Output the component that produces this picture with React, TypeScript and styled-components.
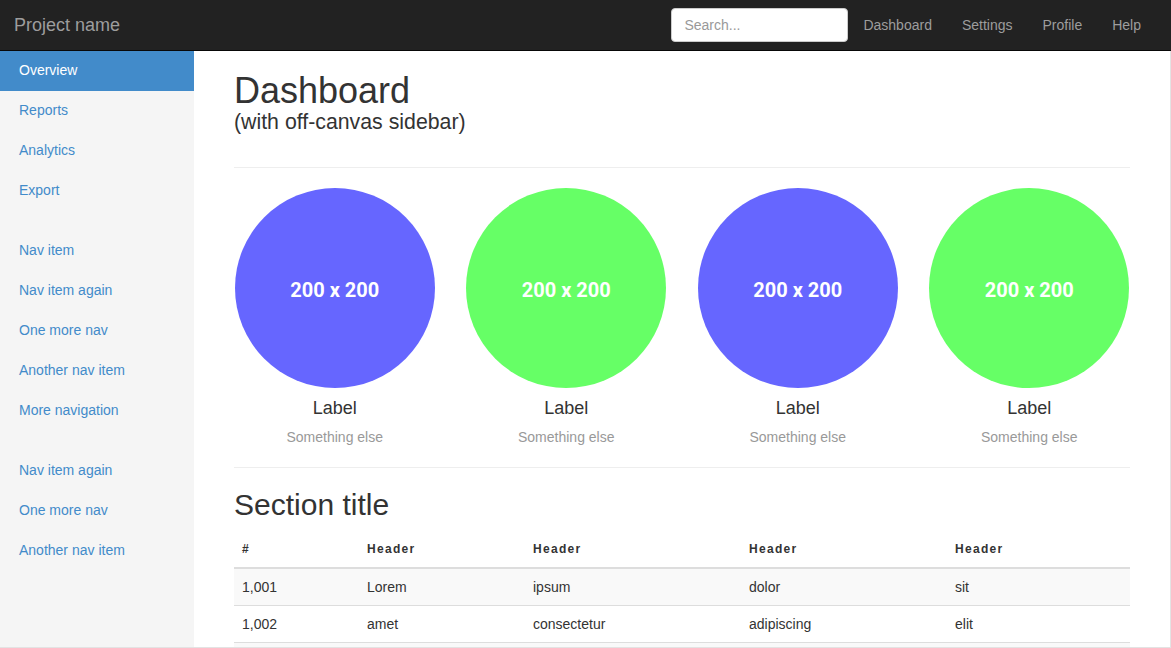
import React from "react";
import styled, { createGlobalStyle } from "styled-components";

const GlobalStyle = createGlobalStyle`
  * {
    box-sizing: border-box;
  }
  html, body {
    margin: 0;
    padding: 0;
    height: 100%;
  }
  body {
    font-family: "Liberation Sans", Arial, Helvetica, sans-serif;
    font-size: 14px;
    line-height: 20px;
    color: #333;
    background: #fff;
    overflow: hidden;
  }
`;

const Page = styled.div`
  display: flex;
  flex-direction: column;
  height: 100vh;
`;

const Navbar = styled.header`
  display: flex;
  align-items: center;
  height: 51px;
  flex-shrink: 0;
  padding: 0 15px 0 14px;
  background: #222;
  border-bottom: 1px solid #080808;
`;

const Brand = styled.a`
  font-size: 18px;
  line-height: 20px;
  color: #9d9d9d;
  text-decoration: none;
  margin-top: -1px;
`;

const NavRight = styled.div`
  display: flex;
  align-items: center;
  margin-left: auto;
`;

const SearchInput = styled.input`
  width: 177px;
  height: 34px;
  padding: 6px 12px;
  border: 1px solid #ccc;
  border-radius: 4px;
  font-family: inherit;
  font-size: 14px;
  color: #555;
  background: #fff;
  &::placeholder {
    color: #999;
  }
`;

const TopLink = styled.a`
  display: block;
  padding: 15px;
  font-size: 14px;
  line-height: 20px;
  color: #9d9d9d;
  text-decoration: none;
`;

const Body = styled.div`
  display: flex;
  flex: 1;
  min-height: 0;
  border-right: 1px solid #e3e3e3;
  border-bottom: 1px solid #e3e3e3;
`;

const Sidebar = styled.nav`
  width: 194px;
  flex-shrink: 0;
  background: #f5f5f5;
`;

const SideGroup = styled.ul`
  list-style: none;
  margin: 0 0 20px;
  padding: 0;
`;

const SideLink = styled.a<{ $active?: boolean }>`
  display: block;
  padding: 9px 19px 11px;
  line-height: 20px;
  font-size: 14px;
  text-decoration: none;
  color: ${({ $active }) => ($active ? "#fff" : "#428bca")};
  background: ${({ $active }) => ($active ? "#428bca" : "transparent")};
`;

const Main = styled.main`
  flex: 1;
  min-width: 0;
  padding: 20px 40px 0;
  overflow: hidden;
`;

const PageHeader = styled.div`
  padding-bottom: 33px;
  border-bottom: 1px solid #eee;
`;

const Title = styled.h1`
  margin: 0;
  font-size: 36px;
  font-weight: 500;
  line-height: 39.6px;
  color: #333;
`;

const Subtitle = styled.div`
  font-size: 21.3px;
  line-height: 23px;
  color: #333;
`;

const Placeholders = styled.div`
  display: grid;
  grid-template-columns: repeat(4, 1fr);
  column-gap: 30px;
  margin-top: 20px;
  padding-bottom: 20px;
  border-bottom: 1px solid #eee;
  text-align: center;
`;

const Placeholder = styled.div`
  display: flex;
  flex-direction: column;
  align-items: center;
`;

const Circle = styled.div<{ $color: string }>`
  width: 200px;
  height: 200px;
  padding-top: 4px;
  border-radius: 50%;
  background: ${({ $color }) => $color};
  display: flex;
  align-items: center;
  justify-content: center;
  color: #fff;
  font-family: Roboto, "Liberation Sans", sans-serif;
  font-weight: 700;
  font-size: 20px;
`;

const Label = styled.h4`
  margin: 11px 0 9px;
  font-size: 18px;
  font-weight: 500;
  line-height: 19.8px;
  color: #333;
`;

const Muted = styled.span`
  display: block;
  color: #999;
  font-size: 14px;
  line-height: 20px;
`;

const SectionTitle = styled.h2`
  margin: 20px 0 10px;
  font-size: 30px;
  font-weight: 500;
  line-height: 33px;
  color: #333;
`;

const Table = styled.table`
  width: 100%;
  border-collapse: collapse;
  table-layout: fixed;
`;

const Th = styled.th`
  padding: 8px;
  text-align: left;
  font-size: 12px;
  font-weight: 700;
  letter-spacing: 1.3px;
  line-height: 20px;
  color: #333;
  border-bottom: 2px solid #ddd;
`;

const Row = styled.tr<{ $striped?: boolean }>`
  background: ${({ $striped }) => ($striped ? "#f9f9f9" : "#fff")};
`;

const Td = styled.td`
  padding: 8px;
  line-height: 20px;
  font-size: 14px;
  color: #333;
  border-bottom: 1px solid #ddd;
  white-space: nowrap;
`;

const sideGroups = [
  ["Overview", "Reports", "Analytics", "Export"],
  ["Nav item", "Nav item again", "One more nav", "Another nav item", "More navigation"],
  ["Nav item again", "One more nav", "Another nav item"],
];

const circles = ["#6666ff", "#66ff66", "#6666ff", "#66ff66"];

const rows = [
  ["1,001", "Lorem", "ipsum", "dolor", "sit"],
  ["1,002", "amet", "consectetur", "adipiscing", "elit"],
  ["1,003", "Integer", "nec", "odio", "Praesent"],
];

const colWidths = [125, 166, 216, 206];

const App = () => {
  return (
    <>
      <GlobalStyle />
      <Page>
        <Navbar>
          <Brand href="#">Project name</Brand>
          <NavRight>
            <SearchInput type="text" placeholder="Search..." />
            {["Dashboard", "Settings", "Profile", "Help"].map((l) => (
              <TopLink key={l} href="#">
                {l}
              </TopLink>
            ))}
          </NavRight>
        </Navbar>
        <Body>
          <Sidebar>
            {sideGroups.map((group, gi) => (
              <SideGroup key={gi}>
                {group.map((item, i) => (
                  <li key={item + i}>
                    <SideLink href="#" $active={gi === 0 && i === 0}>
                      {item}
                    </SideLink>
                  </li>
                ))}
              </SideGroup>
            ))}
          </Sidebar>
          <Main>
            <PageHeader>
              <Title>Dashboard</Title>
              <Subtitle>(with off-canvas sidebar)</Subtitle>
            </PageHeader>

            <Placeholders>
              {circles.map((c, i) => (
                <Placeholder key={i}>
                  <Circle $color={c}>200 x 200</Circle>
                  <Label>Label</Label>
                  <Muted>Something else</Muted>
                </Placeholder>
              ))}
            </Placeholders>

            <SectionTitle>Section title</SectionTitle>
            <Table>
              <colgroup>
                {colWidths.map((w, i) => (
                  <col key={i} style={{ width: w }} />
                ))}
                <col />
              </colgroup>
              <thead>
                <tr>
                  <Th>#</Th>
                  <Th>Header</Th>
                  <Th>Header</Th>
                  <Th>Header</Th>
                  <Th>Header</Th>
                </tr>
              </thead>
              <tbody>
                {rows.map((r, i) => (
                  <Row key={i} $striped={i % 2 === 0}>
                    {r.map((cell, j) => (
                      <Td key={j}>{cell}</Td>
                    ))}
                  </Row>
                ))}
              </tbody>
            </Table>
          </Main>
        </Body>
      </Page>
    </>
  );
};

export default App;
